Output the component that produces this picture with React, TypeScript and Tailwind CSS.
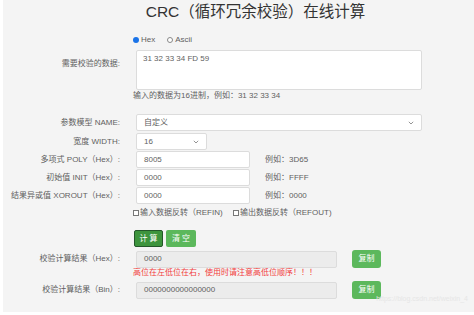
import React from 'react';

const font = "font-['Liberation_Sans','Noto_Sans_CJK_SC',sans-serif]";

const Label: React.FC<{ text: string; className?: string }> = ({ text, className = '' }) => (
  <div className={`w-[117px] shrink-0 text-right text-[8px] text-[#5f5f5f] whitespace-nowrap ${className}`}>{text}</div>
);

const Chevron: React.FC = () => (
  <svg width="6" height="4" viewBox="0 0 6 4" className="shrink-0">
    <path d="M0.8 0.8 L3 3 L5.2 0.8" fill="none" stroke="#888" strokeWidth="0.9" />
  </svg>
);

const TextBox: React.FC<{ value: string; w: string; gray?: boolean }> = ({ value, w, gray }) => (
  <div
    className={`${w} h-[17px] flex items-center px-[7px] border border-[#dcdcdc] rounded-[2px] text-[8px] text-[#5f5f5f] ${
      gray ? 'bg-[#ececec]' : 'bg-white'
    }`}
  >
    {value}
  </div>
);

const Row: React.FC<{ label: string; children: React.ReactNode; className?: string }> = ({ label, children, className = '' }) => (
  <div className={`flex items-center h-[17px] ${className}`}>
    <Label text={label} />
    <div className="ml-[16px] flex items-center">{children}</div>
  </div>
);

const CopyBtn: React.FC = () => (
  <div className="ml-[15px] w-[29px] h-[18px] rounded-[3px] bg-[#5cb85c] text-white text-[8px] flex items-center justify-center">
    复制
  </div>
);

const Box: React.FC = () => <span className="inline-block w-[6px] h-[6px] border border-[#777] bg-white mr-[1px]" />;

export default function App() {
  return (
    <div className={`w-[474px] h-[315px] bg-white pl-[3px] pb-[3px] overflow-hidden ${font}`}>
      <div className="w-full h-full bg-[#f4f4f4] relative">
        <div className="h-[24px] flex items-center justify-center text-[15.5px] text-[#333] pl-[34px]">
          CRC（循环冗余校验）在线计算
        </div>

        <div className="mt-[10px] h-[12px] flex items-center pl-[130px] text-[8px] text-[#5f5f5f]">
          <span className="inline-block w-[6px] h-[6px] rounded-full bg-[#1a73e8] mr-[2px]" />
          <span>Hex</span>
          <span className="inline-block w-[6px] h-[6px] rounded-full border border-[#888] bg-white ml-[12px] mr-[2px]" />
          <span>Ascii</span>
        </div>

        <div className="mt-[4px] flex">
          <Label text="需要校验的数据:" className="pt-[8px]" />
          <div className="ml-[16px] w-[286px] h-[40px] bg-white border border-[#dcdcdc] rounded-[2px] px-[6px] pt-[2px] text-[8px] text-[#5f5f5f]">
            31 32 33 34 FD 59
          </div>
        </div>
        <div className="h-[12px] flex items-center pl-[130px] text-[8px] text-[#5f5f5f]">
          输入的数据为16进制，例如：31 32 33 34
        </div>

        <Row label="参数模型 NAME:" className="mt-[12px]">
          <div className="w-[286px] h-[17px] flex items-center justify-between px-[7px] bg-white border border-[#dcdcdc] rounded-[2px] text-[8px] text-[#5f5f5f]">
            <span>自定义</span>
            <Chevron />
          </div>
        </Row>
        <Row label="宽度 WIDTH:" className="mt-[2px]">
          <div className="w-[71px] h-[17px] flex items-center justify-between px-[7px] bg-white border border-[#dcdcdc] rounded-[2px] text-[8px] text-[#5f5f5f]">
            <span>16</span>
            <Chevron />
          </div>
        </Row>
        <Row label="多项式 POLY（Hex）:" className="mt-[1px]">
          <TextBox value="8005" w="w-[114px]" />
          <span className="ml-[15px] text-[8px] text-[#5f5f5f]">例如：3D65</span>
        </Row>
        <Row label="初始值 INIT（Hex）:" className="mt-[1px]">
          <TextBox value="0000" w="w-[114px]" />
          <span className="ml-[15px] text-[8px] text-[#5f5f5f]">例如：FFFF</span>
        </Row>
        <Row label="结果异或值 XOROUT（Hex）:" className="mt-[1px]">
          <TextBox value="0000" w="w-[114px]" />
          <span className="ml-[15px] text-[8px] text-[#5f5f5f]">例如：0000</span>
        </Row>

        <div className="mt-[2px] h-[14px] flex items-center pl-[130px] text-[8px] text-[#5f5f5f]">
          <span className="w-[100px] flex items-center">
            <Box />
            输入数据反转（REFIN)
          </span>
          <span className="flex items-center">
            <Box />
            输出数据反转（REFOUT)
          </span>
        </div>

        <div className="mt-[10px] h-[17px] flex items-center pl-[131px] gap-[3px]">
          <div className="w-[29px] h-[17px] rounded-[2px] bg-[#3d943d] border border-[#24572a] text-white text-[8px] flex items-center justify-center">
            计 算
          </div>
          <div className="w-[30px] h-[17px] rounded-[2px] bg-[#5cb85c] text-white text-[8px] flex items-center justify-center">
            清 空
          </div>
        </div>

        <div className="mt-[3px] flex items-center h-[18px]">
          <Label text="校验计算结果（Hex）:" />
          <div className="ml-[16px] flex items-center">
            <TextBox value="0000" w="w-[201px]" gray />
            <CopyBtn />
          </div>
        </div>
        <div className="h-[10px] flex items-center pl-[130px] text-[8px] text-[#f23c3c]">
          高位在左低位在右，使用时请注意高低位顺序！！！
        </div>
        <div className="mt-[3px] flex items-center h-[18px]">
          <Label text="校验计算结果（Bin）:" />
          <div className="ml-[16px] flex items-center">
            <TextBox value="0000000000000000" w="w-[201px]" gray />
            <CopyBtn />
          </div>
        </div>

        <div className="absolute right-[6px] bottom-[8px] text-[7px] text-[#e6e6e6]">
          https://blog.csdn.net/weixin_4
        </div>
      </div>
    </div>
  );
}
